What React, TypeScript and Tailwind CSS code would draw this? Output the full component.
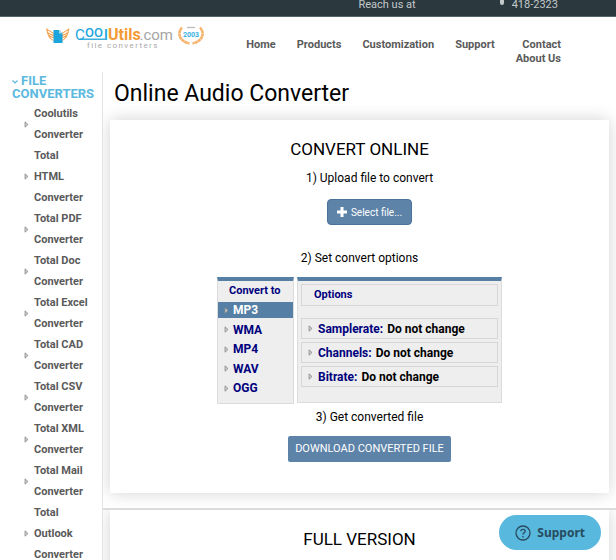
import { useState } from 'react';
import type { ReactNode } from 'react';

const converters = [
  ['Coolutils', 'Converter'],
  ['Total', 'HTML', 'Converter'],
  ['Total PDF', 'Converter'],
  ['Total Doc', 'Converter'],
  ['Total Excel', 'Converter'],
  ['Total CAD', 'Converter'],
  ['Total CSV', 'Converter'],
  ['Total XML', 'Converter'],
  ['Total Mail', 'Converter'],
  ['Total', 'Outlook', 'Converter'],
];

const formats = ['MP3', 'WMA', 'MP4', 'WAV', 'OGG'];

const options = [
  { name: 'Samplerate', value: 'Do not change' },
  { name: 'Channels', value: 'Do not change' },
  { name: 'Bitrate', value: 'Do not change' },
];

function Arrow({ className = '' }: { className?: string }) {
  return (
    <svg viewBox="0 0 5 7" className={`h-[7px] w-[5px] shrink-0 ${className}`} aria-hidden="true">
      <path d="M1 .8 4 3.5 1 6.2Z" fill="#ccc" stroke="#8a8a8a" strokeWidth=".8" />
    </svg>
  );
}

function Logo() {
  return (
    <a href="#" aria-label="CoolUtils.com file converters">
      <svg viewBox="0 0 158 26" className="h-[26px] w-[158px]">
        <g fill="none" stroke="#f5a14b" strokeWidth="1.1">
          <path d="M7.5 15.5C4 14 1.5 10 .8 4.2 3.5 6 6 7 8 9M1.5 7.5C4 9.5 6 10 8 10.8M3 10.5C5 12 6.5 12.5 8 12.8" />
          <path d="M16 15.5C19.5 14 22 10 22.7 4.2 20 6 17.5 7 15.5 9M22 7.5C19.5 9.5 17.5 10 15.5 10.8M20.5 10.5C18.5 12 17 12.5 15.5 12.8" />
        </g>
        <path d="M7.5 5H13L16.5 8.5V18H7.5Z" fill="#1ba5dc" />
        <path d="M13 5V8.5H16.5Z" fill="#a9dcf2" />
        <g fill="#1ba5dc">
          <text x="29" y="14.5" fontSize="15">C</text>
          <text x="39" y="11.5" fontSize="13" fontWeight="500">OO</text>
          <text x="58" y="14.5" fontSize="15" fontWeight="500">l</text>
        </g>
        <path d="M34 14.2H59" stroke="#1ba5dc" strokeWidth="1.3" />
        <text x="62" y="14.5" fontSize="16" fontWeight="700" fill="#f39a35">Utils</text>
        <text x="93.500" y="14.5" fontSize="15" fill="#a5a5a5">.com</text>
        <text x="41" y="23" fontSize="8" letterSpacing="1.4" fill="#aaa">file converters</text>
        <g fill="none" stroke="#f6b26b" strokeWidth="2.6" strokeDasharray="3 .3">
          <path d="M136 2.5C131 8 133 16 143.5 18.5" />
          <path d="M154 2.5C159 8 157 16 146.5 18.5" />
        </g>
        <path d="M141 2.5H149" stroke="#bbb" strokeWidth="1.3" />
        <text x="145" y="11.5" textAnchor="middle" fontSize="7" fontWeight="700" fill="#3bb0e0">2003</text>
      </svg>
    </a>
  );
}

function Card({ children }: { children: ReactNode }) {
  return (
    <section className="bg-white px-4 pt-[17px] pb-[31px] text-center shadow-[0_0_16px_rgba(0,0,0,0.18)]">
      {children}
    </section>
  );
}

export default function App() {
  const [format, setFormat] = useState('MP3');

  return (
    <div className="h-screen overflow-hidden bg-white font-[Roboto,sans-serif] text-black">
      <div className="flex h-[17px] items-end border-b border-[#55656c] bg-[#2b393f] pr-[58px] pb-[3px] text-[11px] leading-4 text-[#c3c8ca]">
        <div className="ml-auto flex items-end">
          <span>Reach us at</span>
          <span className="mb-2 ml-[84px] h-2 w-1 rounded-b-full bg-[#c3c8ca]"></span>
          <span className="ml-2">418-2323</span>
        </div>
      </div>

      <header className="flex h-[55px] items-start justify-between pr-[55px] pl-[46px]">
        <div className="pt-2">
          <Logo />
        </div>
        <nav className="flex gap-[21px] pt-[21px] text-[11px] leading-[14px] font-bold text-[#5a5a5a]">
          <a href="#">Home</a>
          <a href="#">Products</a>
          <a href="#">Customization</a>
          <a href="#">Support</a>
          <div className="flex flex-col text-right">
            <a href="#">Contact</a>
            <a href="#">About Us</a>
          </div>
        </nav>
      </header>

      <div className="flex">
        <aside className="w-[103px] shrink-0 border-r border-[#e4e4e4] pl-3">
          <h2 className="pt-[2px] text-[13px] leading-[13px] font-bold text-[#5bb9de]">
            <svg viewBox="0 0 6 4" className="mr-[3px] inline h-1 w-[6px]" aria-hidden="true">
              <path d="M.5 .5 3 3 5.5 .5" fill="none" stroke="#5bb9de" strokeWidth="1.2" />
            </svg>
            FILE CONVERTERS
          </h2>
          <ul className="pt-[3px] pl-3 text-[11px] leading-[21px] font-bold text-[#5a5a5a]">
            {converters.map((words) => (
              <li key={words.join(' ')} className="flex items-center gap-[5px]">
                <Arrow />
                <a href="#" className="whitespace-pre-line">{words.join('\n')}</a>
              </li>
            ))}
          </ul>
        </aside>

        <main className="min-w-0 flex-1">
          <div className="overflow-hidden border-b-2 border-[#dcdcdc] px-[7px] pb-[15px]">
            <h1 className="pt-[6px] pb-[10px] pl-1 text-[23px] leading-8">Online Audio Converter</h1>
            <Card>
              <h2 className="text-[17px] leading-6">CONVERT ONLINE</h2>
              <div className="pl-5">
                <p className="pt-2 text-[12px] leading-[18px]">1) Upload file to convert</p>
                <button className="mt-3 inline-flex h-[26px] items-center gap-1 rounded-sm border border-[#4a7299] bg-[#5d83a8] px-[9px] text-[10px] text-white">
                  <svg viewBox="0 0 10 10" className="h-[10px] w-[10px]" aria-hidden="true">
                    <path d="M5 0V10M0 5H10" stroke="#fff" strokeWidth="3" />
                  </svg>
                  Select file...
                </button>
              </div>
              <p className="pt-6 text-[12px] leading-[18px]">2) Set convert options</p>

              <div className="mt-[10px] flex items-start justify-center gap-[3px] text-left text-xs leading-4 font-bold text-[#00007d]">
                <div className="h-[127px] w-[77px] border border-t-4 border-[#dcdcdc] border-t-[#557fa5] bg-[#eee]">
                  <h3 className="h-[21px] pt-[2px] pl-[11px] text-[11px]">Convert to</h3>
                  <ul className="flex h-[94px] flex-col justify-between">
                    {formats.map((f) => (
                      <li key={f}>
                        <button
                          onClick={() => setFormat(f)}
                          className={`flex h-4 w-full items-center gap-1 pl-[6px] ${f === format ? 'bg-[#557fa5] text-white' : ''}`}
                        >
                          <Arrow />
                          {f}
                        </button>
                      </li>
                    ))}
                  </ul>
                </div>
                <div className="w-[205px] border border-t-4 border-[#dcdcdc] border-t-[#557fa5] bg-[#eee] px-[3px] pt-[3px] pb-[15px]">
                  <h3 className="mb-3 flex h-[22px] items-center border border-[#d6d6d6] pl-3 text-[11px]">Options</h3>
                  <ul className="flex flex-col gap-[3px]">
                    {options.map((o) => (
                      <li key={o.name}>
                        <button className="flex h-[21px] w-full items-center border border-[#d6d6d6] pl-[6px]">
                          <Arrow className="mr-[5px]" />
                          {o.name}:<span className="ml-1 text-black">{o.value}</span>
                        </button>
                      </li>
                    ))}
                  </ul>
                </div>
              </div>

              <div className="pl-5">
                <p className="pt-1 text-[12px] leading-[18px]">3) Get converted file</p>
                <button className="mt-[10px] h-[26px] rounded-xs bg-[#5d83a8] px-[7px] text-[11px] text-white">
                  DOWNLOAD CONVERTED FILE
                </button>
              </div>
            </Card>
          </div>
          <div className="overflow-hidden px-[7px]">
            <Card>
              <h2 className="text-[17px] leading-6">FULL VERSION</h2>
            </Card>
          </div>
        </main>
      </div>

      <button className="fixed right-[15px] bottom-[10px] flex h-[35px] items-center gap-[6px] rounded-full bg-[#59b8dd] px-4 font-['Noto_Sans',sans-serif] text-xs font-bold text-[#274b5e]">
        <svg viewBox="0 0 16 16" className="h-4 w-4" fill="none" stroke="#274b5e" strokeWidth="1.3" aria-hidden="true">
          <circle cx="8" cy="8" r="7" />
          <path d="M5.9 6.3C5.9 3.7 10.2 3.8 10.2 6.3 10.2 7.9 8 7.8 8 9.6" />
          <path d="M8 11V12.4" />
        </svg>
        Support
      </button>
    </div>
  );
}
